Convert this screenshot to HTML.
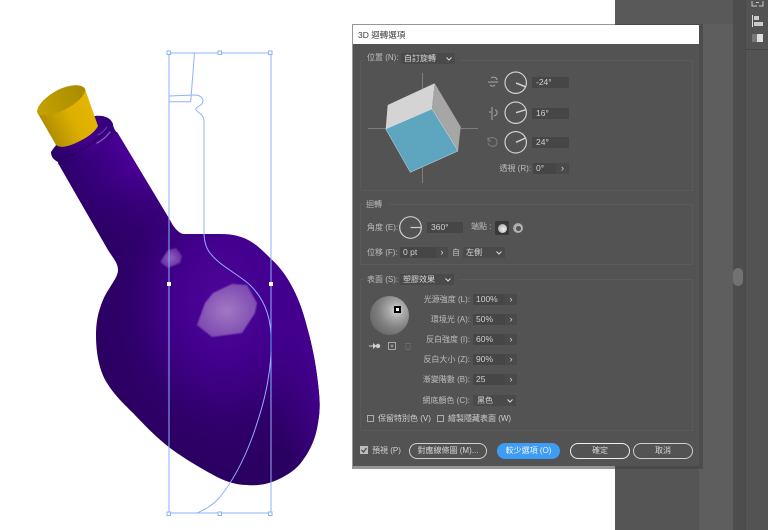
<!DOCTYPE html>
<html lang="zh-Hant"><head><meta charset="utf-8">
<style>
html,body{margin:0;padding:0;width:768px;height:530px;overflow:hidden;background:#fff;}
body{position:relative;font-family:"Liberation Sans","Noto Sans CJK TC",sans-serif;}
.a{position:absolute;}
.t{position:absolute;font-size:8px;line-height:12px;color:#bdbdbd;white-space:nowrap;}
.r{text-align:right;}
.i{position:absolute;background:#464646;color:#d0d0d0;font-size:8.5px;line-height:11px;height:11px;padding-left:3px;box-sizing:border-box;white-space:nowrap;}
.ar{position:absolute;background:#4a4a4a;height:11px;color:#ddd;font-size:9px;line-height:10px;text-align:center;}
.dd{position:absolute;background:#4a4a4a;color:#d8d8d8;font-size:8px;line-height:11px;height:11px;padding-left:3px;box-sizing:border-box;white-space:nowrap;}
.dd svg{position:absolute;right:3px;top:3.5px;}
.fs{position:absolute;border:1px solid #5a5a5a;box-sizing:border-box;}
.b{position:absolute;box-sizing:border-box;height:16px;border-radius:8px;border:1px solid #cfcfcf;color:#d4d4d4;font-size:8px;line-height:14px;text-align:center;white-space:nowrap;}
.c{position:absolute;box-sizing:border-box;width:7px;height:7px;border:1px solid #aaa;}
#dlg{position:absolute;left:0;top:0;width:768px;height:530px;filter:blur(.35px);}
</style></head><body>

<svg class="a" style="left:0;top:0" width="352" height="530" viewBox="0 0 352 530">
<defs>
<radialGradient id="body" gradientUnits="userSpaceOnUse" cx="225" cy="300" r="135" gradientTransform="translate(225 300) scale(1 1.3) translate(-225 -300)">
<stop offset="0" stop-color="#4e0699"/><stop offset=".35" stop-color="#43008e"/><stop offset=".72" stop-color="#2f006a"/><stop offset="1" stop-color="#2a0060"/>
</radialGradient>
<linearGradient id="right" gradientUnits="userSpaceOnUse" x1="272" y1="415" x2="322" y2="398">
<stop offset="0" stop-color="#440090" stop-opacity="0"/><stop offset="1" stop-color="#440090" stop-opacity=".9"/>
</linearGradient>
<linearGradient id="neck" gradientUnits="userSpaceOnUse" x1="72" y1="205" x2="155" y2="157">
<stop offset="0" stop-color="#2c0068"/><stop offset=".45" stop-color="#3a0080"/><stop offset=".78" stop-color="#4a0096"/><stop offset="1" stop-color="#420090"/>
</linearGradient>
<linearGradient id="fade" gradientUnits="userSpaceOnUse" x1="125" y1="175" x2="158" y2="240">
<stop offset="0" stop-color="#fff"/><stop offset="1" stop-color="#000"/>
</linearGradient>
<mask id="m" maskUnits="userSpaceOnUse" x="0" y="0" width="352" height="530"><rect width="352" height="530" fill="url(#fade)"/></mask>
<linearGradient id="rim" gradientUnits="userSpaceOnUse" x1="62" y1="165" x2="112" y2="125">
<stop offset="0" stop-color="#2a0066"/><stop offset=".62" stop-color="#45008f"/><stop offset="1" stop-color="#32007a"/>
</linearGradient>
<linearGradient id="cork" gradientUnits="userSpaceOnUse" x1="46" y1="132" x2="92" y2="107">
<stop offset="0" stop-color="#ad8c00"/><stop offset=".55" stop-color="#dcae00"/><stop offset="1" stop-color="#e4b600"/>
</linearGradient>
<linearGradient id="ctop" gradientUnits="userSpaceOnUse" x1="40" y1="112" x2="85" y2="90">
<stop offset="0" stop-color="#c4a000"/><stop offset="1" stop-color="#a88c00"/>
</linearGradient>
<radialGradient id="hl" cx=".5" cy=".5" r=".6"><stop offset="0" stop-color="#a278c4"/><stop offset="1" stop-color="#7a45ae"/></radialGradient>
<radialGradient id="hl2" cx=".5" cy=".5" r=".6"><stop offset="0" stop-color="#8f5fbc"/><stop offset="1" stop-color="#5f22a0"/></radialGradient>
<filter id="s" x="-10%" y="-10%" width="120%" height="120%"><feGaussianBlur stdDeviation=".7"/></filter>
</defs>
<path d="M58 163L108 250C113 258 118 263 118 270C118 278 108 288 103 300C98 312 96 322 96 335C96 355 100 372 107 383C115 396 124 404 133 413C147 428 162 443 177 453C190 462 204 470 217 477C227 482 237 485 247 485C258 486 268 484 277 480C288 475 297 469 303 460C311 449 316 437 318 423C320 412 320 403 319 393C317 370 313 348 307 327C303 311 298 297 290 283C285 274 278 265 270 258C265 253 259 247 253 243C243 236 232 234 220 234L183 234C177 232 173 226 170 220L117 132Z" fill="url(#body)"/>
<path d="M58 163L108 250C113 258 118 263 118 270C118 278 108 288 103 300C98 312 96 322 96 335C96 355 100 372 107 383C115 396 124 404 133 413C147 428 162 443 177 453C190 462 204 470 217 477C227 482 237 485 247 485C258 486 268 484 277 480C288 475 297 469 303 460C311 449 316 437 318 423C320 412 320 403 319 393C317 370 313 348 307 327C303 311 298 297 290 283C285 274 278 265 270 258C265 253 259 247 253 243C243 236 232 234 220 234L183 234C177 232 173 226 170 220L117 132Z" fill="url(#right)"/>
<path d="M58 163L108 250C113 258 118 263 118 270L183 234C177 232 173 226 170 220L117 132Z" fill="url(#neck)" mask="url(#m)"/>
<path d="M51 152C51 157 54 160 58 162C60 167 66 165 75 161C92 155 108 144 117 133C114 129 113 126 113 124C111 118 104 115 95 116C80 122 60 138 51 152Z" fill="url(#rim)"/>
<path d="M60 158C78 155 96 143 109 127" fill="none" stroke="#2a0064" stroke-width="1.600"/>
<path d="M97 143C103 140 107 136 110 132" fill="none" stroke="#8a55c4" stroke-width="1.400" stroke-linecap="round"/>
<path d="M98 135C102 133 105 130 107 127" fill="none" stroke="#6f30b0" stroke-width="1.200" stroke-linecap="round"/>
<path d="M37 112L56 145C61 149 70 146 80 141C88 137 95 132 98 126L85 89Z" fill="url(#cork)"/>
<path d="M37 112C37 105 47 95 60 89C71 84 83 84 85 89C86 95 77 103 66 109C54 115 40 118 37 112Z" fill="url(#ctop)"/>
<polygon points="213,293 232,284 247,285 257,303 255,313 242,333 212,337 197,325 205,303" fill="url(#hl)" filter="url(#s)"/>
<polygon points="160,262 168,250 176,248 182,256 180,263 168,268" fill="url(#hl2)" filter="url(#s)"/>
<g fill="none" stroke="#8fb0ff" stroke-width="1">
<rect x="169" y="53" width="102" height="460"/>
<path d="M194.500 53L190.700 101.700H169M169 96L195 95C200 95 203 98 203 101C203 106 196 106 195.700 109C196 112 203 113 204 120V232C204 242 206 248 210 253C220 266 238 274 250 285C262 297 270 312 271 335V355C269 385 262 410 252 438C243 462 232 482 220 497C212 506 204 510 197 513"/>
</g>
<path d="M271 328V352" fill="none" stroke="#5fa0ff" stroke-width="1"/>
<g fill="#fff" stroke="#8fb0ff" stroke-width="1">
<rect x="167" y="51" width="3.500" height="3.500"/><rect x="218" y="51" width="3.500" height="3.500"/><rect x="268.500" y="51" width="3.500" height="3.500"/>
<rect x="167" y="512" width="3.500" height="3.500"/><rect x="218" y="512" width="3.500" height="3.500"/><rect x="268.500" y="512" width="3.500" height="3.500"/>
</g>
<rect x="167.500" y="282.500" width="3" height="3" fill="#fff" stroke="#fff"/><rect x="269.500" y="282.500" width="3" height="3" fill="#fff" stroke="#fff"/>
</svg>

<div id="dlg">
<!-- right application chrome -->
<div class="a" style="left:615px;top:0;width:118px;height:530px;background:#5e5e5e"></div>
<div class="a" style="left:615px;top:0;width:84px;height:530px;background:#555"></div>
<div class="a" style="left:615px;top:0;width:118px;height:24px;background:#595959"></div>
<div class="a" style="left:733px;top:0;width:12px;height:530px;background:#4d4d4d"></div>
<div class="a" style="left:745px;top:0;width:23px;height:530px;background:#535353;border-left:1px solid #484848;box-sizing:border-box"></div>
<div class="a" style="left:745px;top:49px;width:23px;height:1px;background:#474747"></div>
<div class="a" style="left:733px;top:268px;width:10px;height:18px;border-radius:5px;background:#727272"></div>
<svg class="a" style="left:750px;top:0" width="16" height="46" viewBox="0 0 16 46">
<path d="M2 1V6H7M9 6H13V1M6 2.500H9" fill="none" stroke="#c8c8c8" stroke-width="1"/>
<path d="M2.500 15V27" stroke="#ddd" stroke-width="1"/><rect x="4" y="16" width="5" height="4" fill="#ccc"/><rect x="4" y="22" width="9" height="4" fill="#ccc"/>
<rect x="2" y="34" width="11" height="8" fill="#ddd"/><rect x="2" y="34" width="5" height="8" fill="#777"/>
</svg>

<!-- dialog -->
<div class="a" style="left:352px;top:24px;width:351px;height:445px;background:#3f3f3f;opacity:.55"></div>
<div class="a" style="left:353px;top:25px;width:346px;height:441px;background:#535353"></div>
<div class="a" style="left:353px;top:25px;width:346px;height:19px;background:#fff"></div>
<div class="t" style="left:358px;top:29px;color:#3a3a3a;font-size:8.500px">3D 迴轉選項</div>

<div class="fs" style="left:360px;top:60px;width:333px;height:131px"></div>
<div class="fs" style="left:360px;top:204px;width:333px;height:61px"></div>
<div class="fs" style="left:360px;top:279px;width:333px;height:152px"></div>

<div class="a" style="left:364px;top:52px;width:95px;height:13px;background:#535353"></div>
<div class="t" style="left:367px;top:52px">位置 (N):</div>
<div class="dd" style="left:401px;top:53px;width:54px">自訂旋轉<svg width="6" height="4"><path d="M.5 .5L3 3L5.500 .5" fill="none" stroke="#ddd"/></svg></div>

<svg class="a" style="left:365px;top:70px" width="210" height="116" viewBox="365 70 210 116">
<path d="M368 128.500H478M422.500 73V183" stroke="#7e7e7e" stroke-width="1" fill="none"/>
<polygon points="385.700,129 387.700,105 434.700,83.300 432,109" fill="#d4d4d4"/>
<polygon points="434.700,83.300 460.700,126.700 458,151 432,109" fill="#a6a6a6"/>
<polygon points="385.700,129 432,109 458,151 410.300,172.300" fill="#5ea6c0" stroke="#cfe3ea" stroke-width=".5"/>
<g fill="none" stroke="#d0d0d0" stroke-width="1.200">
<circle cx="515.700" cy="82.700" r="10.700"/><path d="M516 83L526 87" stroke-width="1.500"/>
<circle cx="515.700" cy="112.700" r="10.700"/><path d="M516 112.700L526 109.700" stroke-width="1.500"/>
<circle cx="515.700" cy="142.300" r="10.700"/><path d="M516 142.300L525.500 138" stroke-width="1.500"/>
</g>
<g fill="none" stroke="#a8a8a8" stroke-width="1">
<path d="M488 82H498M491 78C494 76 497 78 497 80M495 85C493 87 491 86 490 85"/>
<path d="M492 107V120M495 110C498 110 498 115 494 116M489 112H491"/>
<path d="M488 140C490 136 498 137 497 143C496 148 489 147 488 143M488 137V141H491" stroke="#7d7d7d"/>
</g>
</svg>
<div class="i" style="left:532px;top:77px;width:37px;padding-left:4px">-24°</div>
<div class="i" style="left:532px;top:108px;width:37px;padding-left:4px">16°</div>
<div class="i" style="left:532px;top:137px;width:37px;padding-left:4px">24°</div>
<div class="t r" style="left:470px;top:163px;width:61px">透視 (R):</div>
<div class="i" style="left:533px;top:163px;width:23px">0°</div>
<div class="ar" style="left:556px;top:163px;width:13px">›</div>

<div class="a" style="left:364px;top:198px;width:24px;height:12px;background:#535353"></div>
<div class="t" style="left:366px;top:199px">迴轉</div>
<div class="t" style="left:367px;top:222px">角度 (E):</div>
<svg class="a" style="left:398px;top:215px" width="25" height="25" viewBox="398 215 25 25"><g fill="none" stroke="#d0d0d0" stroke-width="1.200"><circle cx="410.500" cy="227.500" r="10.800"/><path d="M410.500 227.500H421"/></g></svg>
<div class="i" style="left:427px;top:222px;width:36px;padding-left:4px">360°</div>
<div class="t" style="left:471px;top:221px">端點 :</div>
<div class="a" style="left:495px;top:221px;width:14px;height:14px;background:#383838;border-radius:1px"></div>
<div class="a" style="left:497.500px;top:224px;width:9px;height:9px;border-radius:50%;background:radial-gradient(circle at 60% 60%,#f0f0f0,#999)"></div>
<div class="a" style="left:513px;top:223px;width:10px;height:10px;border-radius:50%;background:radial-gradient(circle at 55% 55%,#555 30%,#bbb 35%,#888 100%)"></div>
<div class="t" style="left:367px;top:247px">位移 (F):</div>
<div class="i" style="left:400px;top:247px;width:36px">0 pt</div>
<div class="ar" style="left:436px;top:247px;width:12px">›</div>
<div class="t" style="left:452px;top:247px">自</div>
<div class="dd" style="left:463px;top:247px;width:42px">左側<svg width="6" height="4"><path d="M.5 .5L3 3L5.500 .5" fill="none" stroke="#ddd"/></svg></div>

<div class="a" style="left:364px;top:273px;width:94px;height:13px;background:#535353"></div>
<div class="t" style="left:367px;top:274px">表面 (S):</div>
<div class="dd" style="left:400px;top:274px;width:54px">塑膠效果<svg width="6" height="4"><path d="M.5 .5L3 3L5.500 .5" fill="none" stroke="#ddd"/></svg></div>

<div class="a" style="left:370px;top:296px;width:39px;height:39px;border-radius:50%;background:radial-gradient(circle at 68% 36%,#d8d8d8 0,#a8a8a8 22%,#808080 50%,#636363 85%,#5f5f5f 100%)"></div>
<div class="a" style="left:394px;top:306px;width:7px;height:7px;box-sizing:border-box;background:#fff;border:2px solid #000"></div>
<svg class="a" style="left:367px;top:340px" width="48" height="12" viewBox="367 340 48 12">
<path d="M369 345.500H373V343L376.500 346L373 349V346.500H369Z" fill="#cfcfcf"/><circle cx="378" cy="346" r="2.200" fill="#cfcfcf"/>
<rect x="388.500" y="342.500" width="7" height="7" fill="none" stroke="#a5a5a5"/><path d="M392 344.500V347.500M390.500 346H393.500" stroke="#a5a5a5"/>
<path d="M405 343.500H411M406 344.500V349.500H410V344.500" fill="none" stroke="#686868"/>
</svg>

<div class="t r" style="left:400px;top:294px;width:70px">光源強度 (L):</div>
<div class="i" style="left:473px;top:294px;width:32px">100%</div><div class="ar" style="left:505px;top:294px;width:12px">›</div>
<div class="t r" style="left:400px;top:314px;width:70px">環境光 (A):</div>
<div class="i" style="left:473px;top:314px;width:32px">50%</div><div class="ar" style="left:505px;top:314px;width:12px">›</div>
<div class="t r" style="left:400px;top:334px;width:70px">反白強度 (I):</div>
<div class="i" style="left:473px;top:334px;width:32px">60%</div><div class="ar" style="left:505px;top:334px;width:12px">›</div>
<div class="t r" style="left:400px;top:354px;width:70px">反白大小 (Z):</div>
<div class="i" style="left:473px;top:354px;width:32px">90%</div><div class="ar" style="left:505px;top:354px;width:12px">›</div>
<div class="t r" style="left:400px;top:374px;width:70px">漸變階數 (B):</div>
<div class="i" style="left:473px;top:374px;width:32px">25</div><div class="ar" style="left:505px;top:374px;width:12px">›</div>
<div class="t r" style="left:400px;top:395px;width:70px">網底顏色 (C):</div>
<div class="dd" style="left:473px;top:395px;width:43px;padding-left:4px">黑色<svg width="6" height="4"><path d="M.5 .5L3 3L5.500 .5" fill="none" stroke="#ddd"/></svg></div>

<div class="c" style="left:367px;top:415px"></div>
<div class="t" style="left:378px;top:413px;color:#d0d0d0">保留特別色 (V)</div>
<div class="c" style="left:437px;top:415px"></div>
<div class="t" style="left:448px;top:413px;color:#d0d0d0">繪製隱藏表面 (W)</div>

<div class="a" style="left:360px;top:446px;width:8px;height:8px;background:#bdbdbd"></div>
<svg class="a" style="left:360px;top:446px" width="8" height="8"><path d="M1.500 4L3.500 6L6.500 2" fill="none" stroke="#444" stroke-width="1.200"/></svg>
<div class="t" style="left:372px;top:445px;color:#d0d0d0">預視 (P)</div>
<div class="b" style="left:409px;top:443px;width:78px">對應線條圖 (M)...</div>
<div class="b" style="left:497px;top:443px;width:63px;background:#3f9cf3;border-color:#3f9cf3;color:#eaf4ff">較少選項 (O)</div>
<div class="b" style="left:570px;top:443px;width:60px;border:1.500px solid #eee;line-height:13px">確定</div>
<div class="b" style="left:633px;top:443px;width:60px">取消</div>
</div>
</body></html>
